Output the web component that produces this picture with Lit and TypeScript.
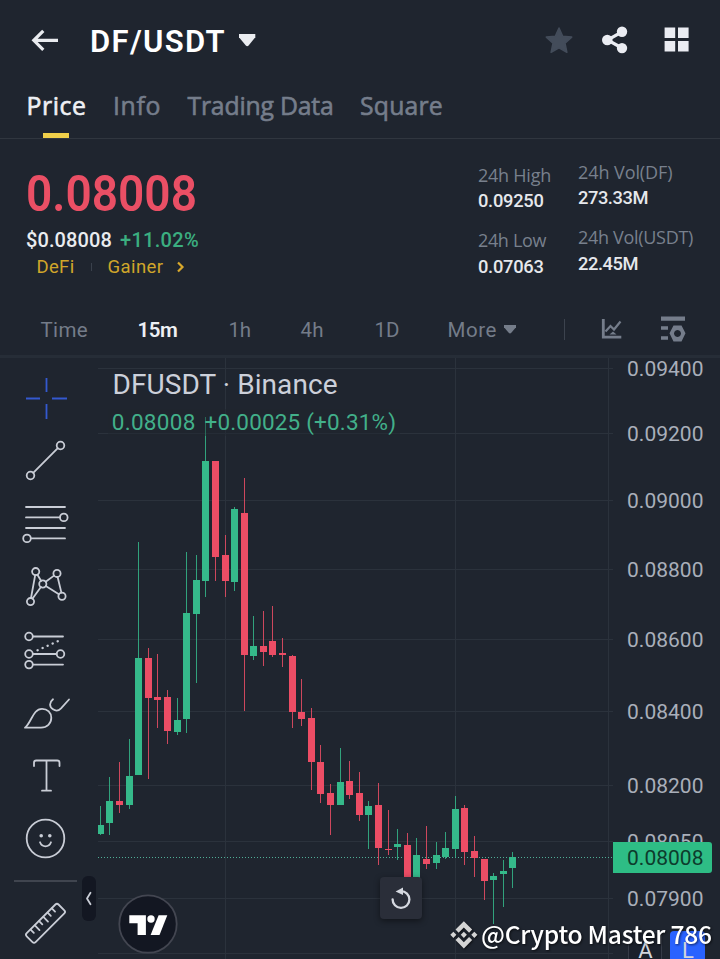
import { LitElement, html, svg, css } from "lit";
import { customElement, property } from "lit/decorators.js";

/** Text that is tracked (or condensed) to occupy a given advance width. */
@customElement("fit-label")
class FitLabel extends LitElement {
  @property() text = "";
  @property({ type: Number }) w = 0;
  @property({ type: Boolean }) condense = false;
  static styles = css`
    :host { display: block; white-space: pre; }
    .t { display: inline-block; transform-origin: 0 50%; }
  `;
  render() {
    return html`<span class="t">${this.text}</span>`;
  }
  updated() {
    const el = this.renderRoot.querySelector(".t") as HTMLElement;
    const natural = el.getBoundingClientRect().width;
    if (!natural || !this.w) return;
    this.style.width = this.w + "px";
    if (this.condense) el.style.transform = `scaleX(${this.w / natural})`;
    else el.style.letterSpacing = (this.w - natural) / this.text.length + "px";
  }
}

const label = (text: string, w: number, cls = "") =>
  html`<fit-label class=${cls} .text=${text} .w=${w}></fit-label>`;

type Candle = [number, number, number, number, number, "g" | "r"];

// x centre, high, body top, body bottom, low, direction
const CANDLES: Candle[] = [
  [100.5, 806, 825, 834, 835, "g"], [109.5, 777, 801, 823, 835, "g"],
  [119.5, 762, 801, 805, 813, "r"], [129.5, 739, 776, 805, 809, "g"],
  [138.5, 542, 658, 775, 775, "g"], [148.5, 648, 658, 698, 779, "r"],
  [157.5, 654, 697, 700, 728, "r"], [167.5, 690, 697, 731, 744, "r"],
  [177.5, 698, 720, 732, 735, "g"], [186.5, 552, 613, 719, 733, "g"],
  [196.5, 555, 580, 614, 683, "g"], [205.5, 417, 461, 581, 597, "g"],
  [215.5, 461, 461, 557, 581, "r"], [225.5, 535, 555, 581, 597, "r"],
  [234.5, 507, 509, 582, 591, "g"], [244.5, 478, 513, 655, 711, "r"],
  [253.5, 616, 646, 656, 660, "g"], [263.5, 611, 646, 652, 666, "r"],
  [272.5, 606, 641, 655, 657, "r"], [282.5, 638, 653, 655, 667, "r"],
  [292.5, 655, 656, 712, 728, "r"], [301.5, 679, 712, 719, 726, "r"],
  [311.5, 708, 718, 762, 790, "r"], [320.5, 745, 762, 794, 803, "r"],
  [330.5, 784, 793, 805, 835, "r"], [340.5, 748, 782, 805, 805, "g"],
  [349.5, 761, 781, 795, 799, "r"], [359.5, 772, 793, 815, 821, "r"],
  [368.5, 801, 806, 815, 849, "g"], [378.5, 783, 805, 848, 865, "r"],
  [388.5, 810, 849, 850, 855, "r"], [397.5, 829, 844, 847, 860, "g"],
  [407.5, 833, 845, 877, 877, "r"], [416.5, 838, 855, 878, 878, "g"],
  [426.5, 826, 859, 864, 869, "r"], [436.5, 842, 855, 863, 869, "g"],
  [445.5, 832, 848, 857, 859, "g"], [455.5, 796, 809, 849, 857, "g"],
  [464.5, 805, 808, 852, 865, "r"], [474.5, 836, 851, 858, 877, "r"],
  [484.5, 859, 859, 881, 900, "r"], [493.5, 873, 876, 880, 924, "g"],
  [503.5, 860, 871, 874, 907, "g"], [512.5, 852, 857, 868, 888, "g"],
];

const AXIS: [string, number][] = [
  ["0.09400", 368.5], ["0.09200", 433.5], ["0.09000", 500.5], ["0.08800", 569.5],
  ["0.08600", 639.5], ["0.08400", 711.5], ["0.08200", 785.5], ["0.08050", 841.5],
  ["0.07900", 898.5], ["", 953.5],
];

@customElement("price-chart")
class PriceChart extends LitElement {
  static styles = css`
    :host { display: block; min-width: 0; }
    svg { display: block; font-family: Roboto, sans-serif; }
    .grid { stroke: #2b323c; stroke-width: 1; }
    .g { fill: #35b98a; }
    .r { fill: #ec4d65; }
    .wick { opacity: 0.85; }
    .axis { fill: #a9afba; font-size: 21px; }
    .name { fill: #ccd0da; font-size: 28px; }
    .quote { fill: #42b08a; font-size: 22.5px; }
    .last { stroke: #4fae96; stroke-width: 1; stroke-dasharray: 1 2; }
    .tag { fill: #2ebd85; }
    .tagtext { fill: #0d3b2c; font-size: 21px; }
    .scale { fill: #d1d4dc; font-size: 22px; text-anchor: middle; }
    .mark { fill: #fff; font: 500 24.6px "Noto Sans CJK SC", "Noto Sans", sans-serif; }
    .shade { filter: drop-shadow(1px 1px 1px rgba(0, 0, 0, 0.6)); }
    .lift { filter: drop-shadow(0 2px 3px rgba(0, 0, 0, 0.45)); }
  `;
  render() {
    return html`<svg width="623" height="601" viewBox="97 358 623 601">
      ${AXIS.map(([, y]) => svg`<line class="grid" x1="98" x2="613" y1=${Math.floor(y) + 0.5} y2=${Math.floor(y) + 0.5} />`)}
      ${[225.5, 455.5, 608.5].map((x) => svg`<line class="grid" x1=${x} x2=${x} y1="358" y2="959" />`)}
      ${AXIS.map(([t, y]) => t ? svg`<text class="axis" x="627" y=${y + 7.5} textLength="76.5">${t}</text>` : null)}
      <line class="last" x1="98" x2="613" y1="857.5" y2="857.5" />
      ${CANDLES.map(([x, h, t, b, l, c]) => svg`
        <rect class="wick ${c}" x=${x - 0.5} y=${h} width="1" height=${l - h} />
        <rect class=${c} x=${Math.max(98, x - 3.5)} y=${t} width=${Math.min(7, x + 3.5 - 98)} height=${b - t} />`)}
      <rect x="108" y="409" width="292" height="27" fill="#1f252f" opacity="0.45" />
      <text class="name" x="112.500" y="394" textLength="225">DFUSDT · Binance</text>
      <text class="quote" x="111.800" y="430" textLength="83.500">0.08008</text>
      <text class="quote" x="204.500" y="430" textLength="191.500">+0.00025 (+0.31%)</text>

      <path class="tag" d="M613 842h96a3 3 0 0 1 3 3v25a3 3 0 0 1-3 3h-96z" />
      <text class="tagtext" x="627" y="865" textLength="76.5">0.08008</text>

      <circle cx="148" cy="924" r="28.7" fill="#131722" stroke="#434651" stroke-width="1.8" />
      <g fill="#fff">
        <path d="M129.3 915.2h16.6V935h-8.3v-11.7h-8.3z" />
        <circle cx="151" cy="919" r="3.7" />
        <path d="M158.6 915.2h8.7L159.5 935h-8.9z" />
      </g>

      <g class="lift"><rect x="380" y="877" width="42" height="42" rx="4" fill="#2a2e39" /></g>
      <path d="M392.6 899.3a8.4 8.4 0 1 0 8.4-8.2" fill="none" stroke="#d6d9e1" stroke-width="2.300" stroke-linecap="round" />
      <path d="M395.600 891.400l7.400-3.900v7.400z" fill="#d6d9e1" />

      <path d="M628.5 959v-23a4 4 0 0 1 4-4h25a4 4 0 0 1 4 4v23" fill="#1b202b" stroke="#363b47" />
      <path d="M670 959v-24a4 4 0 0 1 4-4h27a4 4 0 0 1 4 4v24z" fill="#2962ff" />
      <text class="scale" x="645.5" y="957.5">A</text>
      <text class="scale" x="688" y="957.5">L</text>

      <g class="shade">
        <g transform="translate(450.3 921.3) scale(1.13)" fill="#d4d4d4">
          <path d="M16.624 13.9202l2.7175 2.7154-7.353 7.353-7.353-7.352 2.7175-2.7164 4.6355 4.6595 4.6356-4.6595zm4.6366-4.6366L24 12l-2.7154 2.7164L18.5682 12l2.6924-2.7164zm-9.272.001l2.7163 2.6914-2.7164 2.7174v-.001L9.2721 12l2.7164-2.7154zm-9.2722-.001L5.4088 12l-2.6914 2.6924L0 12l2.7164-2.7164zM11.9885.0115l7.353 7.329-2.7174 2.7154-4.6356-4.6356-4.6355 4.6595-2.7174-2.7154 7.353-7.353z" />
        </g>
        <text class="mark" x="481" y="944" textLength="231">@Crypto Master 786</text>
      </g>
    </svg>`;
  }
}

const TOOLS = [
  svg`<path class="sel" d="M46.5 378v14M46.5 404v15M26 398.5h14M52 398.5h15" />`,
  svg`<circle cx="60.5" cy="445.5" r="3.8" /><circle cx="30.5" cy="475.5" r="3.8" /><path d="M57.8 448.2L33.2 472.8" />`,
  svg`<path d="M26 507h39M26 517.4h34M26 528h39M31 538.4h34" /><circle cx="63.8" cy="517.4" r="3.8" /><circle cx="27" cy="538.4" r="3.8" />`,
  svg`<circle cx="35.7" cy="571.6" r="3.6" /><circle cx="57" cy="573.4" r="3.6" /><circle cx="42.8" cy="584" r="3.6" /><circle cx="62" cy="596.2" r="3.6" /><circle cx="30.5" cy="601.6" r="3.6" />
    <path d="M35.2 575.2L31 598M37.4 574.8L41.2 580.9M40.9 587L32.6 598.6M45.7 581.8L54 575.6M57.6 577L61.4 592.6M45.8 586L58.9 594.3" />`,
  svg`<circle cx="29" cy="636.5" r="3.8" /><circle cx="29" cy="654" r="3.8" /><circle cx="60.5" cy="654" r="3.8" /><circle cx="29" cy="664.6" r="3.8" />
    <path d="M33 636.5h30M33 654h23.6M33 664.6h30" /><path class="dots" d="M37.5 650.3L62 639.4" />`,
  svg`<path d="M25 727.7C31.5 722.500 33 708.800 42 708.800C47.500 708.800 51.300 712.800 51.300 717.800C51.300 723.500 47 727.700 41 727.700ZM53 699.300C49.200 702.500 49 706.500 53 709.300C56 711.400 58.600 710.800 61 708.300L69 699.500" />`,
  svg`<path d="M34 766v-3.200q0-2.300 2.300-2.300h20.900q2.300 0 2.300 2.300V766M46.500 760.500v30M42 790.700h9" />`,
  svg`<circle cx="45.500" cy="838.500" r="18.800" /><circle class="dot" cx="41.200" cy="835.800" r="1.800" /><circle class="dot" cx="49.800" cy="835.800" r="1.800" /><path d="M40 842.300q1.500 4 5.500 4t5.500-4" />`,
];

@customElement("drawing-tools")
class DrawingTools extends LitElement {
  static styles = css`
    :host { position: relative; display: flex; flex-direction: column; width: 97px; padding-top: 8px; box-sizing: border-box; }
    svg { display: block; flex: none; fill: none; stroke: #c9cdd6; stroke-width: 1.800; stroke-linecap: round; stroke-linejoin: round; }
    .sel { stroke: #3459cf; stroke-linecap: butt; }
    .dots { stroke-dasharray: 0.2 5.3; stroke-width: 2.300; }
    .dot { fill: #c9cdd6; stroke: none; }
    .rule { width: 63px; height: 2px; margin: 10px 0 0 14px; background: #40454f; flex: none; }
    .fold { position: absolute; left: 82px; top: 518px; width: 14px; height: 45px; border-radius: 6px; background: #131722; }
  `;
  render() {
    return html`
      ${TOOLS.map((t, i) => html`<svg width="97" height="63" viewBox="0 ${366 + i * 63} 97 63">${t}</svg>`)}
      <div class="rule"></div>
      <svg width="97" height="77" viewBox="0 882 97 77">
        <g transform="translate(45.500 923.300) rotate(-45)">
          <rect x="-22.500" y="-6.300" width="45" height="12.600" rx="2.200" />
          <path d="M-15 -6v4.500M-9 -6v6.500M-3 -6v4.500M3 -6v6.500M9 -6v4.500M15 -6v4.500" />
        </g>
      </svg>
      <div class="fold"><svg width="14" height="45" viewBox="82.500 876 14 45"><path d="M91 892.800l-3.500 5.700l3.500 5.700" /></svg></div>`;
  }
}

@customElement("app-root")
class AppRoot extends LitElement {
  static styles = css`
    :host { display: flex; flex-direction: column; width: 720px; height: 959px; overflow: hidden; background: #1f252f; color: #eaecef; font-family: Roboto, sans-serif; }
    svg { display: block; }
    .header { display: flex; align-items: center; height: 80px; padding: 0 0 0 31px; box-sizing: border-box; flex: none; }
    .pair { font-size: 31px; font-weight: 600; color: #fff; margin: 3px 0 0 31px; line-height: 36px; }
    .caret { margin: 0 0 1px 12px; }
    .actions { display: flex; align-items: center; gap: 28px; margin: 0 30px 0 auto; }
    .tabs { display: flex; gap: 26.500px; height: 59px; padding: 11px 0 0 26.500px; box-sizing: border-box; border-bottom: 1px solid #30363f; font-family: "Open Sans", Roboto, sans-serif; font-size: 24.800px; -webkit-text-stroke: 0.600px currentColor; line-height: 28px; color: #757d8b; flex: none; }
    .tab { display: flex; flex-direction: column; align-items: center; justify-content: space-between; }
    .on { color: #eef0f4; }
    .bar { width: 26px; height: 5.500px; background: #f0cf4a; margin-right: 1px; }
    .summary { display: flex; height: 163px; padding: 28px 0 0 26px; box-sizing: border-box; flex: none; }
    .left { width: 452px; }
    .price { font-size: 50px; line-height: 54px; font-weight: 600; color: #ea4f65; }
    .usd { display: flex; gap: 8px; margin-top: 6px; font-size: 20px; line-height: 26px; font-weight: 500; }
    .up { color: #3bae80; }
    .tags { display: flex; align-items: center; margin-top: 2.500px; padding-left: 10.500px; font-size: 18.500px; line-height: 22px; color: #d0a62a; }
    .sep { width: 1px; height: 8px; margin: 0 16px 0 16px; background: #3a414c; }
    .go { margin-left: 12px; }
    .stats { display: flex; flex-direction: column; gap: 15.400px; width: 100px; line-height: 25.300px; margin-top: -4.500px; }
    .stats.vol { margin-top: -7.500px; }
    .key { font-family: "Open Sans", Roboto, sans-serif; font-size: 18px; line-height: 24px; padding-bottom: 1.300px; color: #78808d; }
    .val { font-size: 18.300px; font-weight: 500; color: #e6e8ec; }
    .intervals { display: grid; grid-template-columns: 97px 91px 72px 74px 73px 116.500px 37px 59px auto; align-items: center; height: 56px; padding-left: 40.500px; box-sizing: border-box; border-bottom: 3px solid #262d37; font-size: 20.500px; line-height: 24px; color: #747c89; flex: none; padding-top: 3px; }
    .intervals svg { margin-bottom: 2px; }
    .intervals .sel { color: #eef0f4; font-weight: 600; }
    .more { display: flex; align-items: center; gap: 7px; }
    .divider { width: 1px; height: 21px; background: #3c434e; margin-bottom: 2px; }
    .body { display: flex; flex: 1; min-height: 0; }
    price-chart { flex: 1; }
  `;
  render() {
    return html`
      <div class="header">
        <svg width="28" height="24" viewBox="31 27 28 24" fill="none" stroke="#e9ebef" stroke-width="3.200"><path d="M58 39.300H34M43.300 29.800L33.800 39.300l9.500 9.500" /></svg>
        ${label("DF/USDT", 136, "pair")}
        <svg class="caret" width="18" height="14" viewBox="238 33 18 14" fill="#eaecf0"><path d="M239 34h16.300v3.300l-6.700 8.200q-1.400 1.400-2.800 0L239 37.300z" /></svg>
        <div class="actions">
          <svg width="28" height="28" viewBox="545 26 28 28" fill="#434c5a" stroke="#434c5a" stroke-width="1.500" stroke-linejoin="round"><path d="M559 28l3.700 8.200 9 .9-6.700 6 1.900 9.200-7.900-4.400-7.900 4.400 1.900-9.200-6.700-6 9-.9z" /></svg>
          <svg width="28" height="28" viewBox="601 25.500 28 28" fill="#eaecf2"><path d="M622 31.300L607.500 39.500L622 47.500" fill="none" stroke="#eaecf2" stroke-width="3.200" /><circle cx="622" cy="31.300" r="5.200" /><circle cx="607.300" cy="39.500" r="5.300" /><circle cx="622" cy="47.600" r="5.200" /></svg>
          <svg class="apps" width="33" height="28" viewBox="657 26 33 28" fill="#eaecf2"><path d="M664.600 27.500h10.600v10.600h-10.600zM678 27.500h10.600v10.600H678zM664.600 41h10.600v10.600h-10.600zM678 41h10.600v10.600H678z" /></svg>
        </div>
      </div>
      <div class="tabs">
        <div class="tab on">${label("Price", 60)}<div class="bar"></div></div>
        <div class="tab">${label("Info", 48)}</div>
        <div class="tab">${label("Trading Data", 146)}</div>
        <div class="tab">${label("Square", 83)}</div>
      </div>
      <div class="summary">
        <div class="left">
          <fit-label class="price" condense .text=${"0.08008"} .w=${171}></fit-label>
          <div class="usd">${label("$0.08008", 86)}${label("+11.02%", 79, "up")}</div>
          <div class="tags">
            ${label("DeFi", 38)}<div class="sep"></div>${label("Gainer", 56)}
            <svg class="go" width="9" height="12" viewBox="176 261 9 12" fill="none" stroke="#d9a92c" stroke-width="2.200"><path d="M178 262.500l4.500 4.500-4.500 4.500" /></svg>
          </div>
        </div>
        <div class="stats">
          <div>${label("24h High", 73, "key")}${label("0.09250", 65.500, "val")}</div>
          <div>${label("24h Low", 68, "key")}${label("0.07063", 65.500, "val")}</div>
        </div>
        <div class="stats vol">
          <div>${label("24h Vol(DF)", 94.500, "key")}${label("273.33M", 70, "val")}</div>
          <div>${label("24h Vol(USDT)", 115, "key")}${label("22.45M", 60, "val")}</div>
        </div>
      </div>
      <div class="intervals">
        ${label("Time", 47.500)}${label("15m", 40, "sel")}${label("1h", 22.500)}${label("4h", 23.500)}${label("1D", 25)}
        <div class="more">${label("More", 49.500)}<svg width="12" height="10" viewBox="504.500 323 12 10" fill="#747c89"><path d="M504.500 324h12v2.300l-4.700 5.500q-1.300 1.200-2.600 0L504.500 326.300z" /></svg></div>
        <div class="divider"></div>
        <svg width="22" height="22" viewBox="601.500 318 22 22" fill="none" stroke="#757d8b"><path d="M603.800 319v18.200h18" stroke-width="2.800" /><path d="M606 331.500l5-5.500 3.500 3.500 6.500-8" stroke-width="2.200" /><path d="M613.500 331.500l3.500 3h-7z" fill="#757d8b" stroke="none" /></svg>
        <svg width="26" height="28" viewBox="660 315 26 28" fill="#757d8b"><path d="M661 316.500h24v4.300h-24zM661 326.300h7v3.400h-7zM661 336.300h7v3.400h-7z" /><path fill-rule="evenodd" d="M673.500 325.500h8l4 7.800-4 8.200h-8l-4-8.200zM677.500 330a3.500 3.500 0 1 0 .01 0z" /></svg>
      </div>
      <div class="body"><drawing-tools></drawing-tools><price-chart></price-chart></div>
    `;
  }
}
